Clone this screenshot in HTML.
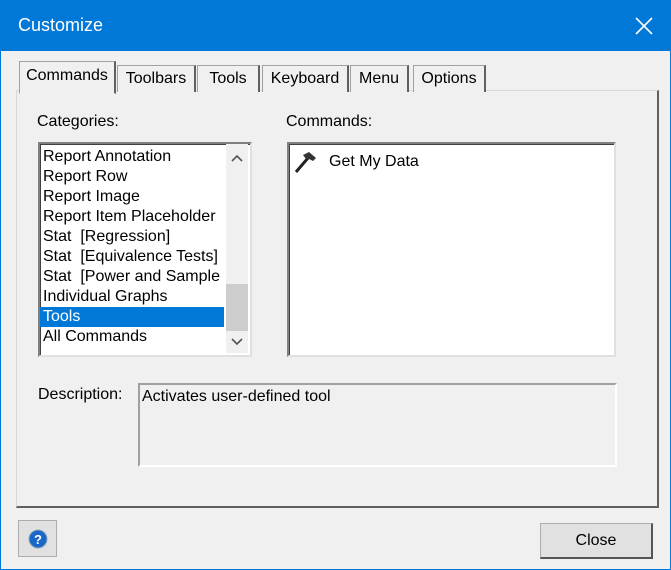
<!DOCTYPE html><html><head><style>
body{margin:0;width:671px;height:570px;overflow:hidden;font-family:"Liberation Sans",sans-serif;font-size:16px;color:#000;}
.win{position:absolute;left:0;top:0;width:669px;height:568px;border:1px solid #0078d7;background:#f0f0f0;}
.title{position:absolute;left:0;top:0;width:669px;height:50px;background:#0078d7;color:#fff;font-size:18px;}
.abs{position:absolute}
.tab{position:absolute;top:64px;height:26px;border:1px solid #a0a0a0;border-bottom:none;border-right:2px solid #606060;background:#f0f0f0;line-height:26px;text-align:center;font-size:16px}
.list{position:absolute;background:#fff;border:2px solid;border-color:#808080 #e0e0e0 #e0e0e0 #808080;box-shadow:inset 1px 1px 0 #404040}
.row{height:20px;line-height:20px;padding-left:3px;white-space:nowrap;overflow:hidden}
</style></head><body>
<div class="win">
<div class="title"><span class="abs" style="left:17px;top:14px">Customize</span>
<svg class="abs" style="left:634px;top:16px" width="18" height="18"><path d="M1 1L17 17M17 1L1 17" stroke="#fff" stroke-width="1.6"/></svg></div>
<div class="abs" style="left:15px;top:89px;width:640px;height:415px;border:1px solid #d8d8d8;border-right:2px solid #606060;border-bottom:2px solid #606060;"></div>
<div class="tab" style="left:116px;width:76px">Toolbars</div>
<div class="tab" style="left:196px;width:60px">Tools</div>
<div class="tab" style="left:261px;width:84px">Keyboard</div>
<div class="tab" style="left:349px;width:56px">Menu</div>
<div class="tab" style="left:412px;width:70px">Options</div>
<div class="tab" style="left:18px;top:60px;height:31px;width:94px;border-bottom:1px solid #f0f0f0;line-height:28px;z-index:2">Commands</div>
<div class="abs" style="left:36px;top:112px">Categories:</div>
<div class="abs" style="left:285px;top:112px">Commands:</div>
<div class="list" style="left:37px;top:141px;width:210px;height:211px">
<div style="position:absolute;left:0;top:3px;width:184px">
<div class="row">Report Annotation</div><div class="row">Report Row</div><div class="row">Report Image</div><div class="row">Report Item Placeholder</div><div class="row">Stat &nbsp;[Regression]</div><div class="row">Stat &nbsp;[Equivalence Tests]</div><div class="row">Stat &nbsp;[Power and Sample</div><div class="row">Individual Graphs</div><div class="row" style="background:#0078d7;color:#fff">Tools</div><div class="row">All Commands</div></div>
<div class="abs" style="left:186px;top:0;width:22px;height:209px;background:#f0f0f0"></div>
<div class="abs" style="left:186px;top:140px;width:22px;height:47px;background:#cdcdcd"></div>
<svg class="abs" style="left:191px;top:10px" width="12" height="8"><path d="M1 7L6 2L11 7" stroke="#555" stroke-width="1.6" fill="none"/></svg>
<svg class="abs" style="left:191px;top:194px" width="12" height="8"><path d="M1 1L6 6L11 1" stroke="#555" stroke-width="1.6" fill="none"/></svg>
</div>
<div class="list" style="left:286px;top:141px;width:325px;height:211px">
<svg class="abs" style="left:4px;top:6px" width="26" height="24"><path d="M3 22L15 8" stroke="#222" stroke-width="3"/><path d="M10 5L16 2L23 8L20 11L16 9L13 9Z" fill="#333"/></svg>
<span class="abs" style="left:40px;top:9px">Get My Data</span></div>
<div class="abs" style="left:37px;top:385px">Description:</div>
<div class="abs" style="left:137px;top:382px;width:475px;height:80px;border:2px solid;border-color:#a0a0a0 #fff #fff #a0a0a0"><span class="abs" style="left:2px;top:3px">Activates user-defined tool</span></div>
<div class="abs" style="left:17px;top:519px;width:37px;height:35px;border:1px solid #adadad;background:#e1e1e1">
<svg class="abs" style="left:9px;top:8px" width="20" height="20"><circle cx="10" cy="10" r="9" fill="#1b66c9" stroke="#8ab" stroke-width="1"/><text x="10" y="15" font-size="13" font-weight="bold" fill="#fff" text-anchor="middle" font-family="Liberation Sans">?</text></svg></div>
<div class="abs" style="left:539px;top:522px;width:110px;height:33px;border:1px solid #adadad;border-right:2px solid #555;border-bottom:2px solid #555;background:#e1e1e1;text-align:center;line-height:33px">Close</div>
</div>
</body></html>
